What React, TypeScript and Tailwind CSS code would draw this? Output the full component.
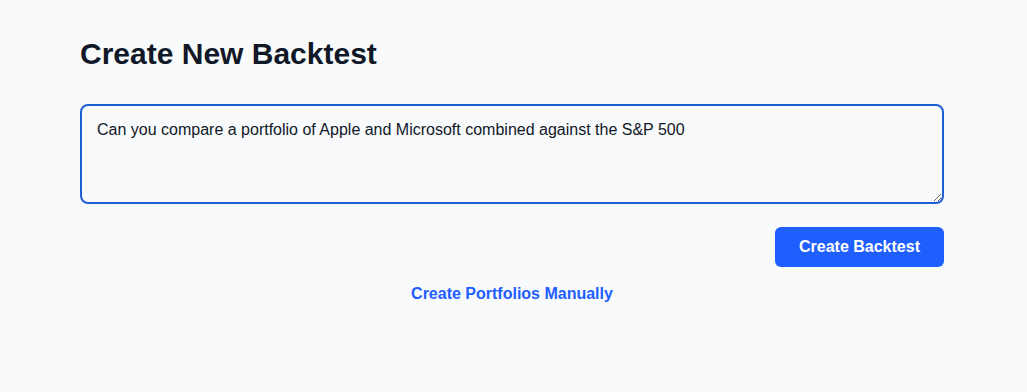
import { useState } from "react";

export default function App() {
  const [prompt, setPrompt] = useState(
    "Can you compare a portfolio of Apple and Microsoft combined against the S&P 500"
  );

  return (
    <div
      className="min-h-screen bg-[#f8fafc] text-[#111827]"
      style={{ fontFamily: '"Liberation Sans", Arial, sans-serif' }}
    >
      <div className="ml-[80px] w-[864px] pt-[36px]">
        <h1 className="text-[30px] font-bold leading-[36px] text-[#111827]">
          Create New Backtest
        </h1>

        <textarea
          value={prompt}
          onChange={(e) => setPrompt(e.target.value)}
          className="mt-[32px] block h-[100px] w-full rounded-lg border-2 border-[#1d5fd6] bg-[#f8fafc] px-[15px] py-[13px] text-[16px] leading-[22px] text-[#111827] outline-none"
        />

        <div className="mt-[23px] flex justify-end">
          <button className="h-[40px] w-[169px] rounded-md bg-[#1f5eff] text-[16px] font-bold text-white">
            Create Backtest
          </button>
        </div>

        <div className="mt-[17px] flex justify-center">
          <button className="text-[16px] font-bold leading-[20px] text-[#1f5eff]">
            Create Portfolios Manually
          </button>
        </div>
      </div>
    </div>
  );
}
